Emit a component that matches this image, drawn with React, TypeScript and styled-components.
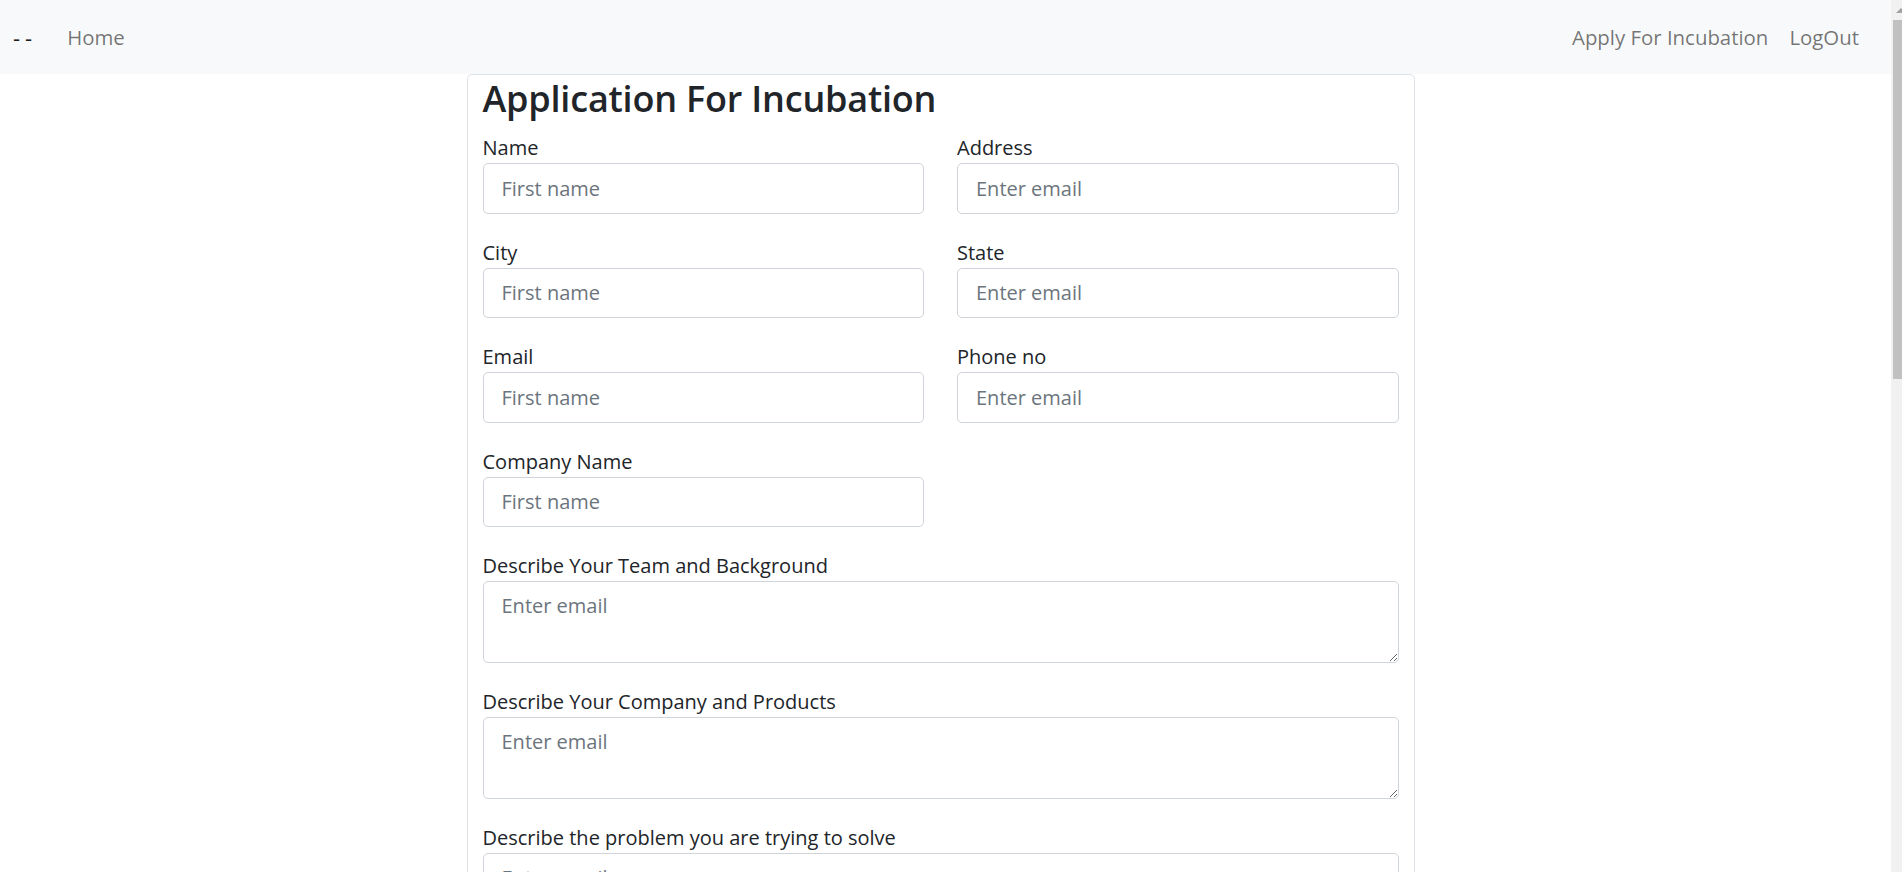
import React from "react";
import styled, { createGlobalStyle } from "styled-components";

const GlobalStyle = createGlobalStyle`
  html, body {
    margin: 0;
    padding: 0;
    background: #ffffff;
    font-family: "Open Sans", "Noto Sans", "Liberation Sans", sans-serif;
    color: #212529;
  }
  * { box-sizing: border-box; }
  ::-webkit-scrollbar { width: 0; height: 0; }
`;

const NavBar = styled.nav`
  height: 74px;
  background: #f8f9fa;
  display: flex;
  align-items: center;
  padding: 0 43px 0 13px;
`;

const Brand = styled.span`
  font-size: 22px;
  line-height: 33px;
  color: rgba(0, 0, 0, 0.9);
  letter-spacing: 5px;
  margin-right: 30px;
`;

const NavLink = styled.a`
  font-size: 20.4px;
  line-height: 33px;
  color: rgba(0, 0, 0, 0.55);
  text-decoration: none;
  cursor: pointer;
`;

const NavRight = styled.div`
  margin-left: auto;
  display: flex;
  align-items: center;
  gap: 21px;
`;

const Main = styled.main`
  display: flex;
  justify-content: center;
  padding: 0 21px 88px 0;
`;

const Card = styled.section`
  width: 948px;
  border: 1px solid #dfe2e6;
  border-radius: 5px;
  padding: 0 15px 30px;
  background: #fff;
`;

const Title = styled.h3`
  margin: 0 0 10px;
  font-size: 36px;
  line-height: 48px;
  font-weight: 600;
  color: #212529;
  letter-spacing: -0.2px;
`;

const Grid = styled.div`
  display: grid;
  grid-template-columns: 1fr 1fr;
  column-gap: 33px;
  row-gap: 24px;
`;

const Field = styled.div<{ $full?: boolean }>`
  display: flex;
  flex-direction: column;
  grid-column: ${(p) => (p.$full ? "1 / -1" : "auto")};
`;

const Label = styled.label`
  font-size: 20px;
  line-height: 30px;
  color: #212529;
`;

const Input = styled.input`
  height: 50.5px;
  width: 100%;
  border: 1px solid #ced4da;
  border-radius: 5px;
  padding: 0 18px;
  font-family: inherit;
  font-size: 20px;
  color: #212529;
  background: #fff;
  outline: none;
  &::placeholder {
    color: #6c757d;
  }
`;

const TextArea = styled.textarea`
  height: 82px;
  width: 100%;
  border: 1px solid #ced4da;
  border-radius: 5px;
  padding: 9px 18px;
  font-family: inherit;
  font-size: 20px;
  line-height: 30px;
  color: #212529;
  background: #fff;
  outline: none;
  resize: vertical;
  &::placeholder {
    color: #6c757d;
  }
`;

const RadioRow = styled.div`
  display: flex;
  gap: 28px;
  align-items: center;
  min-height: 40px;
`;

const RadioLabel = styled.label`
  font-size: 20px;
  display: flex;
  align-items: center;
  gap: 8px;
`;

const SubmitButton = styled.button`
  grid-column: 1 / -1;
  width: max-content;
  font-family: inherit;
  font-size: 20px;
  line-height: 30px;
  padding: 9px 18px;
  border-radius: 5px;
  border: 1px solid #0d6efd;
  background: #0d6efd;
  color: #fff;
  cursor: pointer;
`;

/* Browser's vertical scrollbar, drawn over the right edge of the window */
const ScrollTrack = styled.div`
  position: fixed;
  top: 0;
  right: 0;
  bottom: 0;
  width: 11px;
  background: #f1f1f1;
  z-index: 10;
`;

const ScrollArrow = styled.div`
  position: absolute;
  top: 8px;
  left: 5px;
  width: 0;
  height: 0;
  border-left: 5px solid transparent;
  border-right: 5px solid transparent;
  border-bottom: 5px solid #a3a3a3;
`;

const ScrollThumb = styled.div`
  position: absolute;
  top: 20px;
  left: 2px;
  right: 0;
  height: 359px;
  background: #c1c1c1;
`;

const halfFields = [
  { label: "Name", placeholder: "First name" },
  { label: "Address", placeholder: "Enter email" },
  { label: "City", placeholder: "First name" },
  { label: "State", placeholder: "Enter email" },
  { label: "Email", placeholder: "First name" },
  { label: "Phone no", placeholder: "Enter email" },
  { label: "Company Name", placeholder: "First name" },
];

const longFields = [
  "Describe Your Team and Background",
  "Describe Your Company and Products",
  "Describe the problem you are trying to solve",
  "What is unique about your solution?",
  "What is your value proposition for the customer?",
  "Who are your competitors and what is your competative advantage?",
  "Explain your revenue model",
  "What is the potential market size of the product?",
  "How do you market or plan to market your products and services?",
];

export default function App() {
  return (
    <>
      <GlobalStyle />
      <NavBar>
        <Brand>--</Brand>
        <NavLink>Home</NavLink>
        <NavRight>
          <NavLink>Apply For Incubation</NavLink>
          <NavLink>LogOut</NavLink>
        </NavRight>
      </NavBar>
      <Main>
        <Card>
          <Title>Application For Incubation</Title>
          <Grid>
            {halfFields.map((f) => (
              <Field key={f.label}>
                <Label>{f.label}</Label>
                <Input placeholder={f.placeholder} />
              </Field>
            ))}
            {halfFields.length % 2 === 1 && <div />}
            {longFields.map((l) => (
              <Field key={l} $full>
                <Label>{l}</Label>
                <TextArea placeholder="Enter email" />
              </Field>
            ))}
            <Field $full>
              <Label>Type of Incubation needed</Label>
              <RadioRow>
                <RadioLabel>
                  <input type="radio" name="type" /> Physical Incubation
                </RadioLabel>
                <RadioLabel>
                  <input type="radio" name="type" /> Virtual Incubation
                </RadioLabel>
              </RadioRow>
            </Field>
            <SubmitButton type="button">Submit</SubmitButton>
          </Grid>
        </Card>
      </Main>
      <ScrollTrack>
        <ScrollArrow />
        <ScrollThumb />
      </ScrollTrack>
    </>
  );
}
